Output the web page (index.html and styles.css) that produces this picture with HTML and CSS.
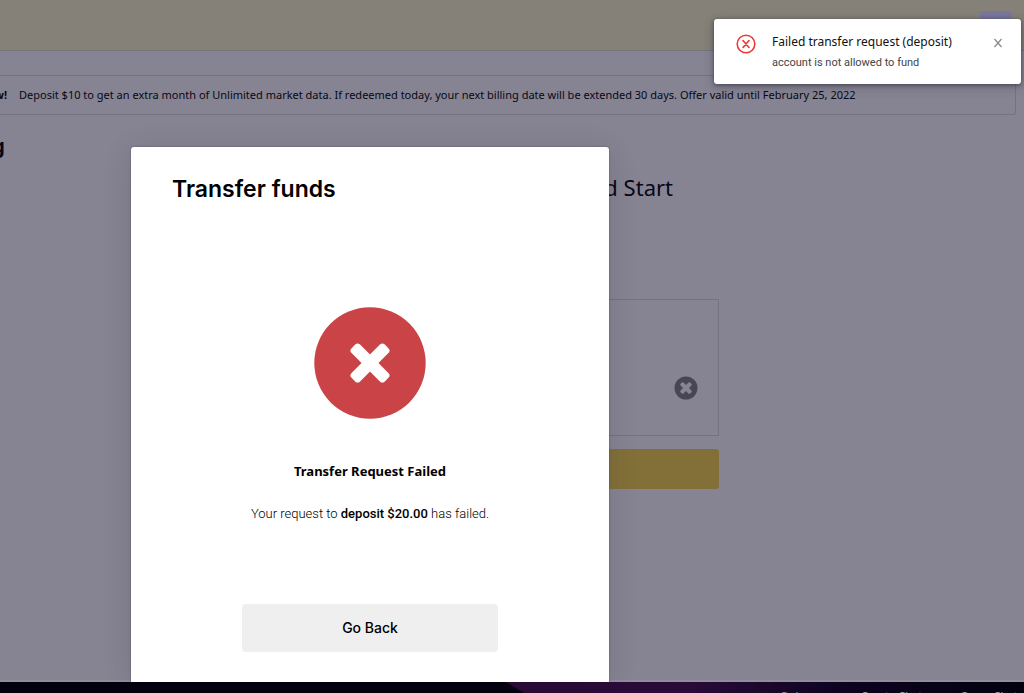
FILE: index.html
```html
<!DOCTYPE html>
<html lang="en">
<head>
<meta charset="utf-8">
<title>Transfer funds</title>
<link rel="stylesheet" href="styles.css">
</head>
<body>
<div class="screen">
  <div class="page">
    <header class="topbar"><span class="account"></span></header>
    <div class="promo"><strong class="promo-tag">w!</strong><span>Deposit $10 to get an extra month of Unlimited market data. If redeemed today, your next billing date will be extended 30 days. Offer valid until February 25, 2022</span></div>
    <div class="columns">
      <h2 class="side-title">g</h2>
      <section class="plan">
        <h2 class="plan-title">d Start</h2>
        <div class="plan-card">
          <button class="clear" aria-label="Remove"><svg viewBox="0 0 24 24" width="24" height="24"><circle cx="12" cy="12" r="11.500" fill="#484654"/><g fill="#868492"><rect x="5.200" y="9.900" width="13.600" height="4.200" rx="1.200" transform="rotate(45 12 12)"/><rect x="5.200" y="9.900" width="13.600" height="4.200" rx="1.200" transform="rotate(-45 12 12)"/></g></svg></button>
        </div>
        <button class="plan-action" aria-label="Continue"></button>
      </section>
    </div>
  </div>
  <footer class="dock">
    <svg class="dock-art" viewBox="0 0 1024 12" preserveAspectRatio="none"><defs><linearGradient id="glow"><stop offset="0" stop-color="#280a34"/><stop offset=".35" stop-color="#290b38"/><stop offset=".65" stop-color="#0c0320"/><stop offset="1" stop-color="#03010e"/></linearGradient></defs><path d="M506 0H1024V12H524Z" fill="url(#glow)"/></svg>
    <span>Only</span><span>Crypto Chat</span><span>Game Chat</span>
  </footer>

  <section class="modal" role="dialog" aria-labelledby="modal-title">
    <h1 class="modal-title" id="modal-title">Transfer funds</h1>
    <div class="result">
      <svg class="result-icon" viewBox="0 0 112 112"><circle cx="56" cy="56" r="55.700" fill="#ca4347"/><g fill="#fff"><rect x="32.500" y="50" width="47" height="12" rx="3.500" transform="rotate(45 56 56)"/><rect x="32.500" y="50" width="47" height="12" rx="3.500" transform="rotate(-45 56 56)"/></g></svg>
      <h2 class="result-title">Transfer Request Failed</h2>
      <p class="result-text">Your request to <b>deposit $20.00</b> has failed.</p>
      <button class="back">Go Back</button>
    </div>
  </section>

  <aside class="toast" role="alert">
    <svg class="toast-icon" viewBox="0 0 20 20" width="20" height="20" fill="none" stroke="#ed3835" stroke-width="1.600" stroke-linecap="round"><circle cx="10" cy="10" r="8.800"/><path d="M7 6.500l6 7M13 6.500l-6 7"/></svg>
    <div class="toast-body"><div class="toast-title">Failed transfer request (deposit)</div><div class="toast-text">account is not allowed to fund</div></div>
    <button class="close" aria-label="Close"><svg viewBox="0 0 10 10" width="10" height="10" stroke="#888" stroke-width="1.200"><path d="M1.500 1l7 8M8.500 1l-7 8"/></svg></button>
  </aside>
</div>
</body>
</html>
```
FILE: styles.css
```css
* { box-sizing: border-box; }
body { margin: 0; font-family: "Noto Sans", "Open Sans", sans-serif; color: #080716; background: #868492; }
button { border: 0; padding: 0; margin: 0; background: none; font: inherit; color: inherit; }
h1, h2, p { margin: 0; }
.screen { position: relative; height: 100vh; display: flex; flex-direction: column; overflow: hidden; }
.page { flex: 1; min-height: 0; overflow: hidden; border-bottom: 2px solid #908e9b; }
.topbar { height: 51px; padding: 11px 13px 0 0; display: flex; justify-content: flex-end; background: #858178; border-bottom: 1px solid #75737c; }
.account { width: 31px; height: 20px; border-radius: 3px; background: #79779a; }
.promo { margin: 24px 8px 0 0; height: 40px; padding-bottom: 2px; display: flex; align-items: center; gap: 12px; border: 1px solid #757380; border-left: 0; border-radius: 0 3px 3px 0; font-size: 11px; white-space: nowrap; }
.promo-tag { width: 7px; display: flex; justify-content: flex-end; }
.columns { display: flex; padding-top: 18px; }
.side-title { width: 5px; display: flex; justify-content: flex-end; font-size: 20px; line-height: 26px; }
.plan { width: 428px; margin-left: 286px; padding-top: 39px; }
.plan-title { padding-right: 46px; text-align: right; font-size: 22px; line-height: 30px; font-weight: 400; }
.plan-card { height: 137px; margin-top: 97px; border: 1px solid #757380; display: flex; justify-content: flex-end; align-items: flex-start; padding: 76px 20px 0; }
.clear { width: 24px; height: 24px; }
.clear svg, .close svg { display: block; }
.plan-action { display: block; width: 100%; height: 40px; margin-top: 13px; border-radius: 3px; background: #827038; }
.dock { position: relative; flex: none; height: 11px; overflow: hidden; background: #04010f; color: #a09da0; display: grid; grid-template-columns: 81px 99px 64px; justify-content: end; padding-top: 6px; font-size: 11px; line-height: 16px; white-space: nowrap; }
.dock-art { position: absolute; left: 0; top: 0; width: 100%; height: 100%; }
.dock span { position: relative; }
.modal { position: absolute; left: 131px; top: 147px; bottom: 11px; width: 478px; background: #fff; border-radius: 3px 3px 0 0; color: #000; padding: 24px 41px; box-shadow: 0 0 2px #5a5866, 0 4px 28px rgba(40, 38, 60, .16); font-family: Inter, sans-serif; clip-path: inset(-40px -40px 0 -40px); }
.modal-title { font-size: 23px; line-height: 36px; font-weight: 600; }
.result { display: flex; flex-direction: column; align-items: center; padding-top: 100px; }
.result-icon { width: 112px; height: 112px; }
.result-title { margin-top: 42px; font: 700 13px/20px "Noto Sans", sans-serif; }
.result-text { margin-top: 23px; font: 300 13px/20px Roboto, sans-serif; }
.result-text b { font-weight: 500; }
.back { margin-top: 80px; width: 256px; height: 48px; padding-bottom: 2px; background: #efefef; border-radius: 4px; font-size: 14px; font-weight: 500; }
.toast { position: absolute; right: 3px; top: 19px; width: 307px; height: 65px; padding: 13px 18px 0 22px; display: flex; background: #fff; border-radius: 3px; box-shadow: 0 1px 4px rgba(20, 20, 35, .5), 0 3px 12px rgba(20, 20, 35, .2); color: #111; }
.toast-icon { margin-top: 2px; }
.toast-body { flex: 1; margin-left: 16px; }
.toast-title { font-size: 12px; line-height: 20px; }
.toast-text { margin-top: 1px; font: 400 11px/20px Roboto, sans-serif; color: #444; }
.close { width: 10px; height: 10px; margin-top: 6px; }
```
